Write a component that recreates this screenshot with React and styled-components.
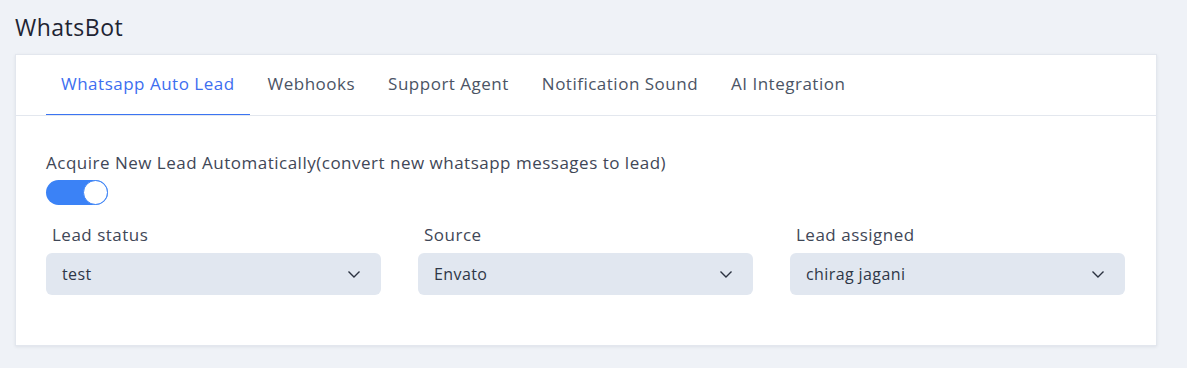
import React, { useState } from "react";
import styled, { createGlobalStyle } from "styled-components";

const GlobalStyle = createGlobalStyle`
  body {
    margin: 0;
    background: #eff2f7;
    font-family: "Open Sans", "Noto Sans", sans-serif;
  }
`;

const Page = styled.div`
  padding: 12px 30px 22px 15px;
`;

const Title = styled.h1`
  margin: 0 0 12px;
  font-size: 23px;
  font-weight: 500;
  letter-spacing: 0.5px;
  line-height: 30px;
  color: #1e2433;
`;

const Card = styled.div`
  background: #fff;
  border: 1px solid #e3e7ee;
  box-shadow: 0 1px 3px rgba(30, 40, 60, 0.08);
`;

const TabBar = styled.div`
  display: flex;
  gap: 3px;
  padding: 0 30px;
  border-bottom: 1px solid #e3e7ee;
`;

const Tab = styled.button`
  border: 0;
  background: none;
  font: inherit;
  font-size: 17px;
  letter-spacing: 0.5px;
  height: 60px;
  padding: 0 15px 4px;
  cursor: pointer;
  color: ${({ $active }) => ($active ? "#3d6ef0" : "#4b5465")};
  box-shadow: ${({ $active }) => ($active ? "inset 0 -1px 0 #3b74f2" : "none")};
`;

const Body = styled.div`
  padding: 35px 31px 50px 30px;
`;

const SwitchLabel = styled.div`
  font-size: 17px;
  letter-spacing: 0.5px;
  color: #3f4757;
  line-height: 24px;
`;

const Switch = styled.button`
  position: relative;
  display: block;
  width: 62px;
  height: 25px;
  margin: 5px 0 18px;
  padding: 0;
  border: 0;
  border-radius: 13px;
  background: ${({ $on }) => ($on ? "#3b82f6" : "#cbd5e1")};
  cursor: pointer;

  &::after {
    content: "";
    position: absolute;
    top: 0;
    left: ${({ $on }) => ($on ? "37px" : "0")};
    width: 23px;
    height: 23px;
    border-radius: 50%;
    background: #fff;
    border: 1px solid #3b82f6;
  }
`;

const Fields = styled.div`
  display: grid;
  grid-template-columns: repeat(3, 1fr);
  column-gap: 37px;
`;

const Field = styled.div`
  display: flex;
  flex-direction: column;
`;

const Label = styled.label`
  font-size: 17px;
  letter-spacing: 0.5px;
  color: #3f4757;
  padding-left: 6px;
  line-height: 24px;
  margin-bottom: 6px;
`;

const Select = styled.div`
  display: flex;
  align-items: center;
  justify-content: space-between;
  height: 42px;
  padding: 0 20px 0 16px;
  border-radius: 6px;
  background: #e1e7f0;
  font-size: 16px;
  letter-spacing: 0.4px;
  color: #2f3747;
`;

const Chevron = () => (
  <svg width="14" height="14" viewBox="0 0 14 14" fill="none">
    <path d="M1.5 4.5 7 10l5.5-5.5" stroke="#2b3240" strokeWidth="1.4" />
  </svg>
);

const tabs = [
  "Whatsapp Auto Lead",
  "Webhooks",
  "Support Agent",
  "Notification Sound",
  "AI Integration",
];

const fields = [
  { label: "Lead status", value: "test" },
  { label: "Source", value: "Envato" },
  { label: "Lead assigned", value: "chirag jagani" },
];

export default function App() {
  const [active, setActive] = useState(0);
  const [on, setOn] = useState(true);

  return (
    <Page>
      <GlobalStyle />
      <Title>WhatsBot</Title>
      <Card>
        <TabBar>
          {tabs.map((t, i) => (
            <Tab key={t} $active={i === active} onClick={() => setActive(i)}>
              {t}
            </Tab>
          ))}
        </TabBar>
        <Body>
          <SwitchLabel>
            Acquire New Lead Automatically(convert new whatsapp messages to lead)
          </SwitchLabel>
          <Switch $on={on} onClick={() => setOn(!on)} />
          <Fields>
            {fields.map((f) => (
              <Field key={f.label}>
                <Label>{f.label}</Label>
                <Select>
                  {f.value}
                  <Chevron />
                </Select>
              </Field>
            ))}
          </Fields>
        </Body>
      </Card>
    </Page>
  );
}
